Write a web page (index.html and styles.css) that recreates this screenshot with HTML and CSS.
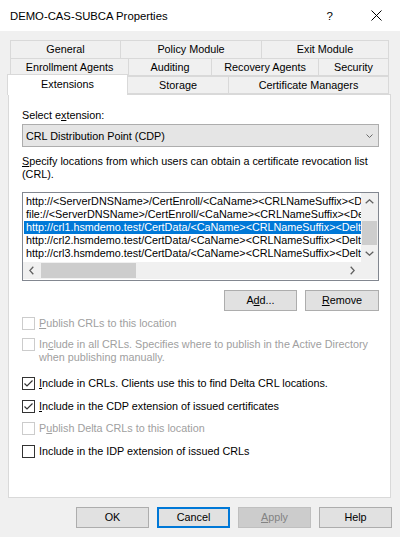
FILE: index.html
```html
<!DOCTYPE html>
<html>
<head>
<meta charset="utf-8">
<title>DEMO-CAS-SUBCA Properties</title>
<link rel="stylesheet" href="styles.css">
</head>
<body>
<div class="window">
  <div class="titlebar">
    <span class="title">DEMO-CAS-SUBCA Properties</span>
    <span class="tb-help">?</span>
    <svg class="tb-close" width="11" height="11" viewBox="0 0 11 11"><path d="M0.5 0.5L10.5 10.5M10.5 0.5L0.5 10.5" stroke="#000" stroke-width="1" fill="none"/></svg>
  </div>

  <div class="tabs">
    <div class="tabrow r1">
      <div class="tab w-general">General</div>
      <div class="tab w-policy">Policy Module</div>
      <div class="tab w-exit">Exit Module</div>
    </div>
    <div class="tabrow r2">
      <div class="tab w-enroll">Enrollment Agents</div>
      <div class="tab w-audit">Auditing</div>
      <div class="tab w-recovery">Recovery Agents</div>
      <div class="tab w-security">Security</div>
    </div>
    <div class="tabrow r3">
      <div class="tab sel w-ext">Extensions</div>
      <div class="tab w-storage">Storage</div>
      <div class="tab w-certmgr">Certificate Managers</div>
    </div>
  </div>

  <div class="panel">
    <div class="label">Select e<u>x</u>tension:</div>
    <div class="select">
      <span>CRL Distribution Point (CDP)</span>
      <svg class="select-arrow" width="7" height="4" viewBox="0 0 7 4"><path d="M0.5 0.5L3.5 3.5L6.5 0.5" stroke="#6a6a6a" stroke-width="1" fill="none"/></svg>
    </div>
    <div class="desc"><u>S</u>pecify locations from which users can obtain a certificate revocation list<br>(CRL).</div>

    <div class="listbox">
      <div class="items">
        <div class="item">http://&lt;ServerDNSName&gt;/CertEnroll/&lt;CaName&gt;&lt;CRLNameSuffix&gt;&lt;DeltaCRLAllowed&gt;.crl</div>
        <div class="item">file://&lt;ServerDNSName&gt;/CertEnroll/&lt;CaName&gt;&lt;CRLNameSuffix&gt;&lt;DeltaCRLAllowed&gt;.crl</div>
        <div class="item selected">http://crl1.hsmdemo.test/CertData/&lt;CaName&gt;&lt;CRLNameSuffix&gt;&lt;DeltaCRLAllowed&gt;.crl</div>
        <div class="item">http://crl2.hsmdemo.test/CertData/&lt;CaName&gt;&lt;CRLNameSuffix&gt;&lt;DeltaCRLAllowed&gt;.crl</div>
        <div class="item">http://crl3.hsmdemo.test/CertData/&lt;CaName&gt;&lt;CRLNameSuffix&gt;&lt;DeltaCRLAllowed&gt;.crl</div>
      </div>
      <div class="vscroll">
        <div class="sb-btn"><svg width="9" height="5" viewBox="0 0 9 5"><path d="M0.7 4.3L4.5 0.8L8.3 4.3" stroke="#606060" stroke-width="1.3" fill="none"/></svg></div>
        <div class="vtrack"><div class="vthumb"></div></div>
        <div class="sb-btn"><svg width="9" height="5" viewBox="0 0 9 5"><path d="M0.7 0.7L4.5 4.2L8.3 0.7" stroke="#606060" stroke-width="1.3" fill="none"/></svg></div>
      </div>
      <div class="hscroll">
        <div class="sb-btn"><svg width="5" height="9" viewBox="0 0 5 9"><path d="M4.3 0.7L0.8 4.5L4.3 8.3" stroke="#606060" stroke-width="1.3" fill="none"/></svg></div>
        <div class="htrack"><div class="hthumb"></div></div>
        <div class="sb-btn"><svg width="5" height="9" viewBox="0 0 5 9"><path d="M0.7 0.7L4.2 4.5L0.7 8.3" stroke="#606060" stroke-width="1.3" fill="none"/></svg></div>
      </div>
      <div class="corner"></div>
    </div>

    <div class="btnrow">
      <div class="btn w-add">A<u>d</u>d...</div>
      <div class="btn w-remove"><u>R</u>emove</div>
    </div>

    <div class="checks">
      <div class="check disabled"><span class="box"></span><span class="ctext"><u>P</u>ublish CRLs to this location</span></div>
      <div class="check disabled c2"><span class="box"></span><span class="ctext">In<u>c</u>lude in all CRLs. Specifies where to publish in the Active Directory<br>when publishing manually.</span></div>
      <div class="check c3"><span class="box"><svg width="11" height="11" viewBox="0 0 11 11"><path d="M1.5 5.5L4 8L9.5 2.5" stroke="#333" stroke-width="1.2" fill="none"/></svg></span><span class="ctext"><u>I</u>nclude in CRLs. Clients use this to find Delta CRL locations.</span></div>
      <div class="check c4"><span class="box"><svg width="11" height="11" viewBox="0 0 11 11"><path d="M1.5 5.5L4 8L9.5 2.5" stroke="#333" stroke-width="1.2" fill="none"/></svg></span><span class="ctext"><u>I</u>nclude in the CDP extension of issued certificates</span></div>
      <div class="check disabled c5"><span class="box"></span><span class="ctext">P<u>u</u>blish Delta CRLs to this location</span></div>
      <div class="check c6"><span class="box"></span><span class="ctext">Include in the IDP extension of issued CRLs</span></div>
    </div>
  </div>

  <div class="footer">
    <div class="btn">OK</div>
    <div class="btn default">Cancel</div>
    <div class="btn disabled"><u>A</u>pply</div>
    <div class="btn">Help</div>
  </div>
</div>
</body>
</html>
```

FILE: styles.css
```css
* { box-sizing: border-box; }

body {
  margin: 0;
  background: #f0f0f0;
  font-family: "Liberation Sans", Arial, sans-serif;
  font-size: 10.8px;
  color: #000;
}

.window {
  width: 400px;
  height: 537px;
  background: #f0f0f0;
  overflow: hidden;
}

/* title bar */
.titlebar {
  height: 31px;
  background: #fff;
  display: flex;
  align-items: center;
  padding-left: 10px;
}
.title { flex: 1; font-size: 11.3px; }
.tb-help { font-size: 11.5px; margin-right: 38px; }
.tb-close { margin-right: 18px; }

/* tabs */
.tabs { padding-top: 9px; }
.tabrow { display: flex; }
.r1, .r2 { padding-left: 10px; }
.r2 { margin-top: -1px; }
.r3 {
  margin-top: -2px;
  padding-left: 7px;
  height: 20px;
  align-items: flex-end;
  position: relative;
  z-index: 1;
}
.tab {
  border: 1px solid #d9d9d9;
  background: #f0f0f0;
  text-align: center;
  height: 19px;
  line-height: 17px;
  white-space: nowrap;
}
.tab + .tab { margin-left: -1px; }
.r2 .tab { height: 18px; line-height: 16px; }
.r3 .tab { height: 18px; line-height: 16px; }
.r3 .tab.sel {
  height: 21px;
  line-height: 18px;
  margin-bottom: -1px;
  background: #fff;
  border-bottom: none;
  position: relative;
  z-index: 2;
}

.w-general { width: 111px; }
.w-policy { width: 142px; }
.w-exit { width: 128px; }
.w-enroll { width: 119px; }
.w-audit { width: 84px; }
.w-recovery { width: 108px; }
.w-security { width: 71px; }
.w-ext { width: 121px; }
.w-storage { width: 102px; }
.w-certmgr { width: 161px; }

/* panel */
.panel {
  margin-left: 8px;
  width: 383px;
  height: 404px;
  background: #fff;
  border: 1px solid #d9d9d9;
  padding: 13px 11px 0 13px;
}
.label { line-height: 15px; }
.select {
  margin-top: 1px;
  height: 23px;
  border: 1px solid #adadad;
  background: #e5e5e5;
  display: flex;
  align-items: center;
  justify-content: space-between;
  padding: 0 5px 0 3px;
}
.select-arrow { margin-top: 1px; }
.desc {
  margin-top: 8px;
  line-height: 13px;
}

/* listbox */
.listbox {
  margin-top: 11px;
  height: 89px;
  border: 1px solid #828790;
  display: grid;
  grid-template-columns: 338px 17px;
  grid-template-rows: 69px 17px;
  background: #fff;
}
.items {
  padding-top: 2px;
  overflow: hidden;
  white-space: nowrap;
}
.item {
  height: 13px;
  line-height: 13px;
  padding-left: 2px;
  margin-left: 1px;
}
.item.selected {
  background: #0078d7;
  color: #fff;
}
.vscroll {
  background: #f0f0f0;
  display: flex;
  flex-direction: column;
}
.sb-btn {
  width: 17px;
  height: 17px;
  flex: none;
  display: flex;
  align-items: center;
  justify-content: center;
}
.vtrack { flex: 1; padding-top: 11px; }
.vthumb { height: 24px; background: #cdcdcd; margin: 0 1px; }
.hscroll {
  background: #f0f0f0;
  display: flex;
}
.htrack { flex: 1; padding-left: 1px; padding-top: 1px; }
.hthumb { width: 95px; height: 15px; background: #cdcdcd; }
.corner { background: #f0f0f0; }

/* buttons */
.btnrow {
  margin-top: 9px;
  display: flex;
  justify-content: flex-end;
  gap: 8px;
}
.btn {
  height: 21px;
  border: 1px solid #adadad;
  background: #e1e1e1;
  text-align: center;
  line-height: 19px;
  width: 73px;
}
.w-add { width: 73px; }
.w-remove { width: 74px; }
.btn.default { border: 2px solid #0078d7; line-height: 17px; }
.btn.disabled { background: #cccccc; border-color: #bfbfbf; color: #838383; }

/* checkboxes */
.checks { margin-top: 6px; }
.check {
  display: flex;
  align-items: flex-start;
  line-height: 13px;
}
.check .box {
  width: 13px;
  height: 13px;
  flex: none;
  border: 1px solid #333;
  background: #fff;
  margin-right: 4px;
  display: flex;
  align-items: center;
  justify-content: center;
}
.check.disabled .box { border-color: #cccccc; }
.check.disabled .ctext { color: #a0a0a0; }
.c2 { margin-top: 8px; }
.c3 { margin-top: 13px; }
.c4 { margin-top: 10px; }
.c5 { margin-top: 9px; }
.c6 { margin-top: 10px; }

/* footer */
.footer {
  padding: 9px 8px 0 0;
  display: flex;
  justify-content: flex-end;
  gap: 8px;
}
```
